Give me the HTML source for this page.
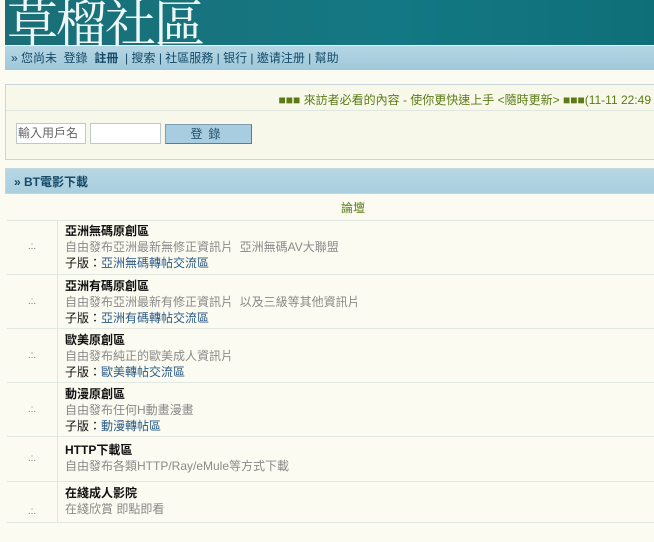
<!DOCTYPE html>
<html><head><meta charset="utf-8"><style>
body{margin:0;width:654px;height:508px;overflow:hidden;background:#fbfbf1;font-family:"Liberation Sans","Noto Sans CJK TC",sans-serif;font-size:12px;position:relative}
.hdr{position:absolute;left:5px;top:0;width:649px;height:45px;background:linear-gradient(90deg,#1b6f78,#137883 60%,#0f6f79);overflow:hidden}
.hdr span{position:absolute;left:2px;top:-17px;font-family:"Liberation Serif","Noto Serif CJK SC",serif;font-size:51px;color:#eef6f6;letter-spacing:-2px;white-space:nowrap}
.nav{position:absolute;left:5px;top:46px;width:649px;height:24px;background:linear-gradient(#b5d6e4,#9fc8da);color:#154a68;font-size:12px;line-height:24px;padding-left:6px;box-sizing:border-box;white-space:nowrap}
.box{position:absolute;left:5px;top:84px;width:660px;height:74px;border:1px solid #c6d6da;background:#f8f8ea}
.box .l1{position:absolute;right:15px;top:6px;color:#5a7b16;font-size:12px;white-space:nowrap}
.box .sep{position:absolute;left:0;right:0;top:25px;border-top:1px solid #dfe6de}
.in{position:absolute;top:38px;height:21px;border:1px solid #bfc9cc;background:#fff;box-sizing:border-box;color:#666;font-size:12px;line-height:19px;padding-left:1px;white-space:nowrap;overflow:hidden}
.btn{position:absolute;top:39px;width:87px;height:20px;background:#a8cce0;border:1px solid #7f9fb1;border-right-color:#5e7c8c;border-bottom-color:#5e7c8c;box-sizing:border-box;text-align:center;color:#204c66;line-height:18px;letter-spacing:6px}
.sec{position:absolute;left:5px;top:168px;width:660px;height:26px;background:linear-gradient(#b7d7e4,#a9cfdf);border:1px solid #c3d8e0;color:#174a66;font-weight:bold;line-height:26px;padding-left:8px;box-sizing:border-box}
.colh{position:absolute;left:7px;top:196px;width:660px;height:24px;border-bottom:1px solid #dfe6de;color:#5a7b16;line-height:24px}
.colh span{position:absolute;left:334px}
.row{position:absolute;left:7px;width:660px;border-bottom:1px solid #e1e7e1}
.row .ic{position:absolute;left:0;top:0;bottom:0;width:50px;border-right:1px solid #dfe6de;text-align:center;color:#6a7c80;font-size:10px}
.row .t{position:absolute;left:58px;top:3px;line-height:16px;font-size:12px;white-space:nowrap}
.row b{color:#111}
.g{color:#8a8a8a}
.k{color:#111}
.a{color:#2a5a86}
</style></head><body>
<div class="hdr"><span>草榴社區</span></div>
<div class="nav">» 您尚未 &nbsp;登錄 &nbsp;<b>註冊</b> &nbsp;| 搜索 | 社區服務 | 银行 | 邀请注册 | 幫助</div>
<div class="box"><div class="l1">■■■ 來訪者必看的內容 - 使你更快速上手 &lt;隨時更新&gt; ■■■(11-11 22:49</div><div class="sep"></div>
<div class="in" style="left:10px;width:70px">輸入用戶名</div><div class="in" style="left:84px;width:71px"></div><div class="btn" style="left:159px">登錄</div></div>
<div class="sec">» BT電影下載</div>
<div class="colh"><span>論壇</span></div>
<div class="row" style="top:220px;height:54px"><div class="ic" style="line-height:54px">.:.</div><div class="t"><b>亞洲無碼原創區</b><br><span class="g">自由發布亞洲最新無修正資訊片 &nbsp;亞洲無碼AV大聯盟</span><br><span class="k">子版：</span><span class="a">亞洲無碼轉帖交流區</span></div></div>
<div class="row" style="top:275px;height:53px"><div class="ic" style="line-height:53px">.:.</div><div class="t"><b>亞洲有碼原創區</b><br><span class="g">自由發布亞洲最新有修正資訊片 &nbsp;以及三級等其他資訊片</span><br><span class="k">子版：</span><span class="a">亞洲有碼轉帖交流區</span></div></div>
<div class="row" style="top:329px;height:53px"><div class="ic" style="line-height:53px">.:.</div><div class="t"><b>歐美原創區</b><br><span class="g">自由發布純正的歐美成人資訊片</span><br><span class="k">子版：</span><span class="a">歐美轉帖交流區</span></div></div>
<div class="row" style="top:383px;height:53px"><div class="ic" style="line-height:53px">.:.</div><div class="t"><b>動漫原創區</b><br><span class="g">自由發布任何H動畫漫畫</span><br><span class="k">子版：</span><span class="a">動漫轉帖區</span></div></div>
<div class="row" style="top:437px;height:44px"><div class="ic" style="line-height:44px">.:.</div><div class="t" style="top:5px"><b>HTTP下載區</b><br><span class="g">自由發布各類HTTP/Ray/eMule等方式下載</span></div></div>
<div class="row" style="top:482px;height:40px"><div class="ic" style="line-height:60px">.:.</div><div class="t"><b>在綫成人影院</b><br><span class="g">在綫欣賞 即點即看</span></div></div>
</body></html>
